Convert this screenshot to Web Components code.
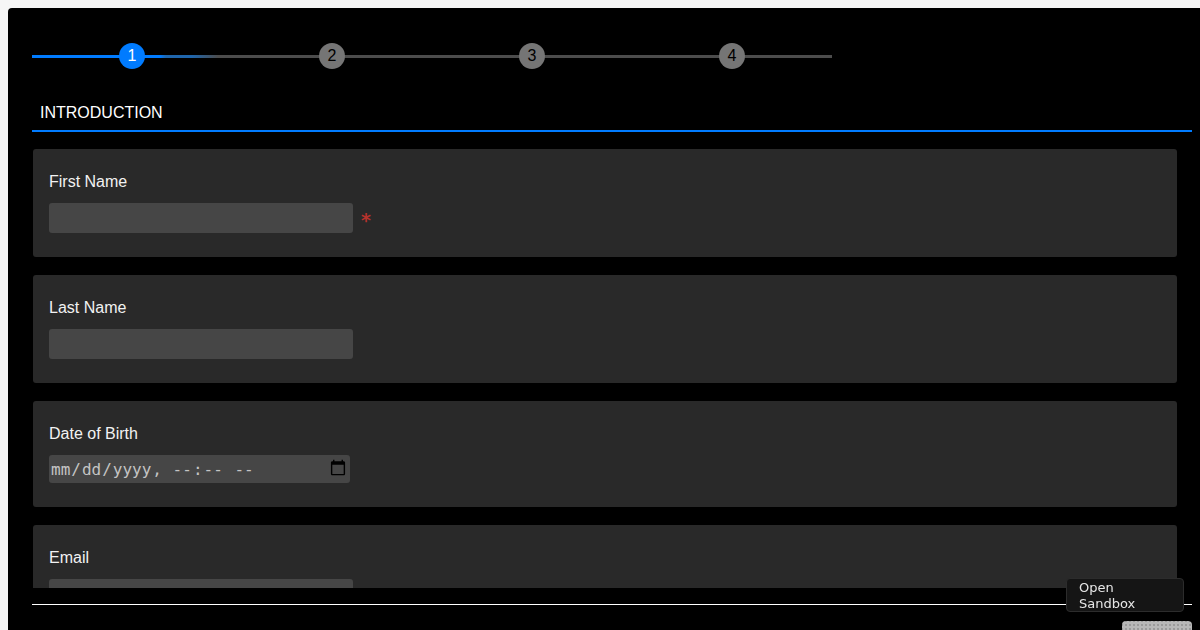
<!DOCTYPE html>
<html>
<head>
<meta charset="utf-8">
<style>
  html, body { margin: 0; height: 100%; overflow: hidden; }
  body {
    background-color: #f6f6f6;
    font-family: "Liberation Sans", Arial, sans-serif;
    color: #fff;
  }
</style>
</head>
<body>
<wizard-shell>
  <step-bar slot="steps" current="1" count="4"></step-bar>
  <section-tab slot="tab">INTRODUCTION</section-tab>
  <form-field label="First Name" required></form-field>
  <form-field label="Last Name"></form-field>
  <form-field label="Date of Birth" type="datetime-local"></form-field>
  <form-field label="Email"></form-field>
</wizard-shell>
<sandbox-chip>Open Sandbox</sandbox-chip>

<script>
class WizardShell extends HTMLElement {
  constructor() {
    super();
    this.attachShadow({ mode: 'open' });
    this.shadowRoot.innerHTML = `
      <style>
        :host {
          display: flex;
          flex-direction: column;
          box-sizing: border-box;
          height: 622px;
          margin: 8px 0 0 8px;
          padding: 0 8px 0 24px;
          background: #000;
          border-top-left-radius: 4px;
          overflow: hidden;
        }
        .steps { padding-top: 35px; height: 26px; flex: none; }
        .tab { margin-top: 34px; flex: none; }
        .body {
          height: 456px;
          flex: none;
          overflow: hidden;
          padding: 17px 15px 0 1px;
          box-sizing: border-box;
          display: flex;
          flex-direction: column;
          gap: 18px;
        }
        .footer {
          flex: none;
          margin-top: 16px;
          height: 1px;
          background: #fff;
        }
        .actions { flex: none; display: flex; justify-content: flex-end; margin-top: 16px; }
        .next {
          width: 70px;
          height: 20px;
          background-color: #b8b8b8;
          background-image: radial-gradient(circle, #9a9a9a 0.7px, transparent 1px);
          background-size: 4px 4px;
          background-position: 2px 2px;
          border-radius: 4px 4px 0 0;
        }
      </style>
      <div class="steps"><slot name="steps"></slot></div>
      <div class="tab"><slot name="tab"></slot></div>
      <div class="body"><slot></slot></div>
      <div class="footer"></div>
      <div class="actions"><div class="next"></div></div>
    `;
  }
}

class StepBar extends HTMLElement {
  connectedCallback() {
    const count = +this.getAttribute('count');
    const current = +this.getAttribute('current');
    let dots = '';
    for (let i = 1; i <= count; i++) {
      dots += `<span class="dot ${i === current ? 'on' : ''}">${i}</span>`;
    }
    this.attachShadow({ mode: 'open' });
    this.shadowRoot.innerHTML = `
      <style>
        :host { display: block; width: 800px; height: 26px; }
        .track {
          height: 26px;
          display: flex;
          align-items: center;
          gap: 174px;
          padding-left: 87px;
          box-sizing: border-box;
          background: linear-gradient(to right, #007bff 0, #007bff 128px, #1f66ad 134px, #1f66ad 160px, #4c4c4c 186px) 0 50% / 100% 3px no-repeat;
        }
        .dot {
          width: 26px;
          height: 26px;
          flex: none;
          border-radius: 50%;
          background: #757575;
          color: #000;
          font-size: 16px;
          line-height: 26px;
          text-align: center;
        }
        .dot.on { background: #007bff; color: #fff; }
      </style>
      <div class="track">${dots}</div>
    `;
  }
}

class SectionTab extends HTMLElement {
  constructor() {
    super();
    this.attachShadow({ mode: 'open' });
    this.shadowRoot.innerHTML = `
      <style>
        :host {
          display: block;
          padding: 0 8px 7px;
          border-bottom: 2px solid #007bff;
          font-size: 16px;
          line-height: 20px;
          color: #fff;
        }
      </style>
      <slot></slot>
    `;
  }
}

class FormField extends HTMLElement {
  connectedCallback() {
    const type = this.getAttribute('type') || 'text';
    const star = this.hasAttribute('required') ? '<span class="star">*</span>' : '';
    this.attachShadow({ mode: 'open' });
    this.shadowRoot.innerHTML = `
      <style>
        :host {
          display: block;
          flex: none;
          box-sizing: border-box;
          padding: 23px 16px 24px;
          background: #292929;
          border-radius: 3px;
        }
        label { display: block; font-size: 16px; line-height: 20px; margin-bottom: 11px; color: #f2f2f2; }
        .row { display: flex; align-items: center; }
        input {
          box-sizing: border-box;
          width: 304px;
          height: 30px;
          padding: 0;
          border: 0;
          border-radius: 3px;
          background: #464646;
          color: #c4c4c4;
          outline: 0;
        }
        input[type="datetime-local"] {
          width: 301px;
          height: 28px;
          font-family: monospace;
          font-size: 16px;
          padding: 0 1px;
        }
        input::-webkit-calendar-picker-indicator {
          box-sizing: border-box;
          width: 18px;
          height: 18px;
          padding: 0;
          margin: -2px 2px 0 0;
        }
        .star { margin-left: 8px; color: #b5322c; font-family: "DejaVu Sans", sans-serif; font-size: 19px; font-weight: 700; line-height: 30px; position: relative; top: 2px; }
      </style>
      <label>${this.getAttribute('label')}</label>
      <div class="row"><input type="${type}">${star}</div>
    `;
  }
}

class SandboxChip extends HTMLElement {
  constructor() {
    super();
    this.attachShadow({ mode: 'open' });
    this.shadowRoot.innerHTML = `
      <style>
        :host {
          position: fixed;
          left: 1066px;
          top: 578px;
          box-sizing: border-box;
          width: 118px;
          height: 34px;
          padding: 1px 12px;
          background: #151515;
          border: 1px solid #2c2c2c;
          border-radius: 4px;
          font-family: "DejaVu Sans", sans-serif;
          font-size: 13px;
          line-height: 16px;
          color: #e6e6e6;
        }
        span { display: block; width: 70px; }
      </style>
      <span><slot></slot></span>
    `;
  }
}

customElements.define('wizard-shell', WizardShell);
customElements.define('step-bar', StepBar);
customElements.define('section-tab', SectionTab);
customElements.define('form-field', FormField);
customElements.define('sandbox-chip', SandboxChip);
</script>
</body>
</html>
